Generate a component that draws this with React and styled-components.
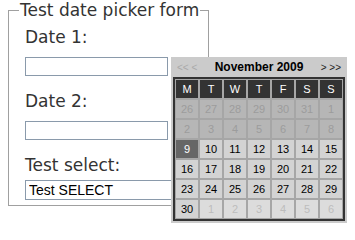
import React from "react";
import styled, { createGlobalStyle } from "styled-components";

const Global = createGlobalStyle`
  html, body { margin: 0; padding: 0; background: #fff; }
  body { font-family: "DejaVu Sans", Verdana, sans-serif; }
`;

const Page = styled.div`
  position: relative;
  padding: 1px 0 0 8px;
  width: 355px;
  height: 230px;
  box-sizing: border-box;
  overflow: hidden;
`;

const Form = styled.fieldset`
  margin: 0;
  width: 201px;
  box-sizing: border-box;
  border: 1px solid #a0a0a0;
  padding: 0 0 5px 16px;
  min-width: 0;
`;

const Legend = styled.legend`
  margin-left: -6px;
  padding: 0 1px;
  font-size: 17px;
  line-height: 18px;
  color: #333;
`;

const Label = styled.label`
  display: block;
  margin-top: ${(p) => p.$gap}px;
  font-size: 17px;
  line-height: 20px;
  color: #333;
`;

const TextInput = styled.input`
  display: block;
  margin: 10px 0 0;
  width: 143px;
  height: 19px;
  box-sizing: border-box;
  border: 1px solid #8a9aab;
  padding: 0;
  background: #fff;
`;

const Select = styled.select`
  display: block;
  margin: 5px 0 0;
  width: 160px;
  height: 20px;
  box-sizing: border-box;
  border: 1px solid #8a9aab;
  border-radius: 0;
  appearance: none;
  background: #fff;
  padding: 0 0 0 3px;
  font-family: "Liberation Sans", Arial, sans-serif;
  font-size: 14px;
  color: #000;
`;

const Calendar = styled.div`
  position: absolute;
  left: 171px;
  top: 57px;
  width: 176px;
  box-sizing: border-box;
  padding: 0 2px 2px;
  background: #cbcbcb;
  font-family: "Liberation Sans", Arial, sans-serif;
`;

const CalHeader = styled.div`
  height: 20px;
  display: flex;
  align-items: center;
  justify-content: space-between;
  padding: 0 4px;
`;

const Nav = styled.span`
  font-size: 10px;
  color: ${(p) => (p.$disabled ? "#a9a9a9" : "#222")};
  width: 24px;
  text-align: ${(p) => p.$align};
  white-space: pre;
`;

const Month = styled.span`
  font-size: 12px;
  font-weight: bold;
  color: #000;
`;

const Grid = styled.div`
  display: grid;
  grid-template-columns: repeat(7, 22px);
  grid-template-rows: repeat(7, 18px);
  gap: 2px;
  padding: 1px;
  border: 2px solid #333;
  background: #a6a6a6;
`;

const tones = {
  head: { bg: "#333", fg: "#fff" },
  prev: { bg: "#b6b6b6", fg: "#9c9c9c" },
  cur: { bg: "#d3d3d3", fg: "#000" },
  sel: { bg: "#666", fg: "#fff" },
  next: { bg: "#dcdcdc", fg: "#bcbcbc" },
};

const Cell = styled.div`
  display: flex;
  align-items: center;
  justify-content: center;
  font-size: 11px;
  background: ${(p) => tones[p.$tone].bg};
  color: ${(p) => tones[p.$tone].fg};
`;

const heads = ["M", "T", "W", "T", "F", "S", "S"];

export default function App() {
  const days = [];
  [26, 27, 28, 29, 30, 31, 1, 2, 3, 4, 5, 6, 7, 8].forEach((d) =>
    days.push({ d, t: "prev" })
  );
  for (let d = 9; d <= 30; d++) days.push({ d, t: d === 9 ? "sel" : "cur" });
  for (let d = 1; d <= 6; d++) days.push({ d, t: "next" });

  return (
    <>
      <Global />
      <Page>
        <Form>
          <Legend>Test date picker form</Legend>
          <Label $gap={8}>Date 1:</Label>
          <TextInput type="text" />
          <Label $gap={15}>Date 2:</Label>
          <TextInput type="text" />
          <Label $gap={15}>Test select:</Label>
          <Select defaultValue="a">
            <option value="a">Test SELECT</option>
          </Select>
        </Form>
        <Calendar>
          <CalHeader>
            <Nav $disabled $align="left">{"<< <"}</Nav>
            <Month>November 2009</Month>
            <Nav $align="right">{"> >>"}</Nav>
          </CalHeader>
          <Grid>
            {heads.map((h, i) => (
              <Cell key={"h" + i} $tone="head">{h}</Cell>
            ))}
            {days.map((x, i) => (
              <Cell key={i} $tone={x.t}>{x.d}</Cell>
            ))}
          </Grid>
        </Calendar>
      </Page>
    </>
  );
}
